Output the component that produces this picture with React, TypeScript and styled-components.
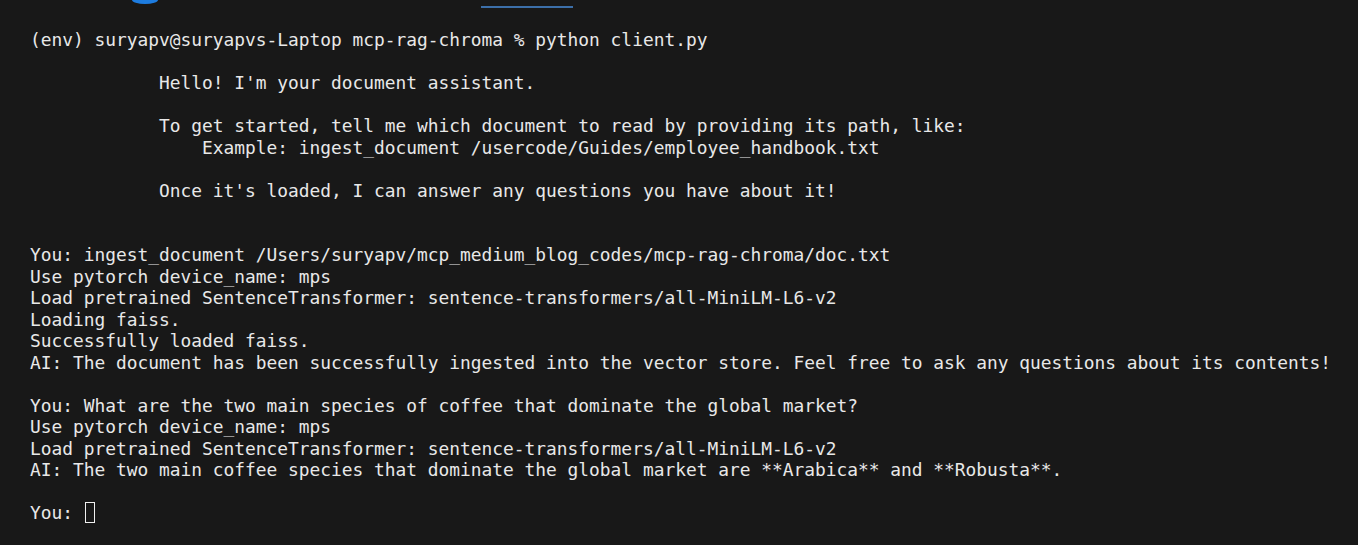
import React from "react";
import styled, { createGlobalStyle } from "styled-components";

const Global = createGlobalStyle`
  html, body {
    margin: 0;
    padding: 0;
    background: #181818;
  }
  body {
    width: 1358px;
    height: 545px;
    overflow: hidden;
  }
`;

const Window = styled.div`
  width: 1358px;
  height: 545px;
  background: #181818;
  display: flex;
  flex-direction: column;
  overflow: hidden;
`;

const TabStrip = styled.div`
  height: 10px;
  display: flex;
  align-items: flex-start;
  flex-shrink: 0;
`;

const Blob = styled.div`
  margin-left: 132px;
  width: 26px;
  height: 4px;
  background: #1d7ce0;
  border-radius: 0 0 50% 50% / 0 0 100% 100%;
`;

const TabUnderline = styled.div`
  margin-left: 323px;
  margin-top: 6px;
  width: 92px;
  height: 2px;
  background: #3c6fa9;
`;

const Output = styled.pre`
  margin: 0;
  padding: 19px 0 0 30px;
  font-family: "DejaVu Sans Mono", "Liberation Mono", monospace;
  font-size: 17.88px;
  line-height: 21.5px;
  color: #e8e8e8;
  white-space: pre;
`;

const Line = styled.div`
  height: 21.5px;
`;

const Cursor = styled.span`
  display: inline-block;
  width: 8px;
  height: 19px;
  border: 1.5px solid #f0f0f0;
  vertical-align: -4px;
  margin-left: 1px;
`;

const lines: string[] = [
  "(env) suryapv@suryapvs-Laptop mcp-rag-chroma % python client.py",
  "",
  "            Hello! I'm your document assistant.",
  "",
  "            To get started, tell me which document to read by providing its path, like:",
  "                Example: ingest_document /usercode/Guides/employee_handbook.txt",
  "",
  "            Once it's loaded, I can answer any questions you have about it!",
  "",
  "",
  "You: ingest_document /Users/suryapv/mcp_medium_blog_codes/mcp-rag-chroma/doc.txt",
  "Use pytorch device_name: mps",
  "Load pretrained SentenceTransformer: sentence-transformers/all-MiniLM-L6-v2",
  "Loading faiss.",
  "Successfully loaded faiss.",
  "AI: The document has been successfully ingested into the vector store. Feel free to ask any questions about its contents!",
  "",
  "You: What are the two main species of coffee that dominate the global market?",
  "Use pytorch device_name: mps",
  "Load pretrained SentenceTransformer: sentence-transformers/all-MiniLM-L6-v2",
  "AI: The two main coffee species that dominate the global market are **Arabica** and **Robusta**.",
  "",
];

export default function App() {
  return (
    <Window>
      <Global />
      <TabStrip>
        <Blob />
        <TabUnderline />
      </TabStrip>
      <Output>
        {lines.map((l, i) => (
          <Line key={i}>{l}</Line>
        ))}
        <Line>
          You: <Cursor />
        </Line>
      </Output>
    </Window>
  );
}
